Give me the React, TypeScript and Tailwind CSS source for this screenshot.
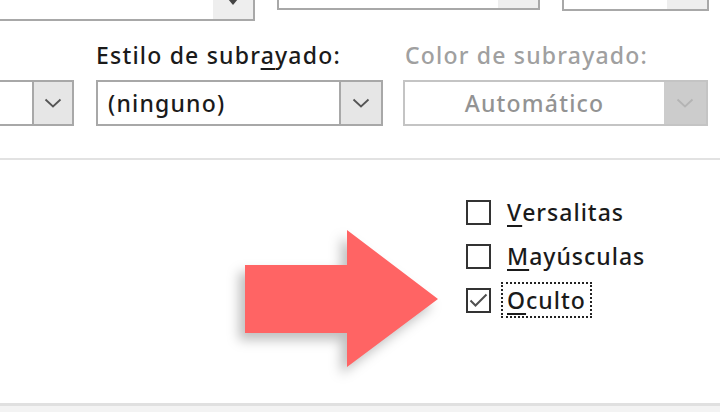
import React from "react";

const font = { fontFamily: '"Noto Sans", "Open Sans", sans-serif' };

function Chevron({ disabled }: { disabled?: boolean }) {
  return (
    <svg width="18" height="10" viewBox="0 0 18 10" fill="none">
      <path
        d="M1.5 1.5 L9 8.5 L16.5 1.5"
        stroke={disabled ? "#b4b4b4" : "#555555"}
        strokeWidth="1.8"
      />
    </svg>
  );
}

function Check({ checked, label, u, focus }: { checked?: boolean; label: string; u: number; focus?: boolean }) {
  return (
    <div className="flex items-center h-[44px]">
      <div className="w-[25px] h-[25px] border-2 border-[#333333] bg-white flex items-center justify-center">
        {checked && (
          <svg width="19" height="15" viewBox="0 0 19 15" fill="none">
            <path d="M1.5 7.5 L6.5 12.5 L17.5 1.5" stroke="#505050" strokeWidth="2" />
          </svg>
        )}
      </div>
      <div
        className={`ml-[10px] px-[4px] h-[36px] flex items-center text-[23px] font-medium tracking-[1px] text-[#1a1a1a] ${
          focus ? "border-2 border-dotted border-[#222222]" : "border-2 border-transparent"
        }`}
      >
        <span className="underline decoration-[2px] underline-offset-[4px]">{label.slice(0, u)}</span>
        <span>{label.slice(u)}</span>
      </div>
    </div>
  );
}

export default function App() {
  return (
    <div className="relative w-[720px] h-[413px] bg-white overflow-hidden" style={font}>
      {/* top row, cut off by the picture edge */}
      <div className="flex items-start h-[22px]">
        <div className="ml-[-30px] mt-[-30px] w-[285px] h-[51px] border-2 border-[#a8a8a8] flex justify-end">
          <div className="w-[40px] bg-[#eeeeee] flex items-end justify-center pb-[13px]">
            <svg width="12" height="7" viewBox="0 0 12 7">
              <path d="M1 0 L11 0 L6 6 Z" fill="#444444" />
            </svg>
          </div>
        </div>
        <div className="ml-[22px] mt-[-30px] w-[263px] h-[40px] border-2 border-[#a8a8a8] flex justify-end">
          <div className="w-[40px] bg-[#eeeeee]" />
        </div>
        <div className="ml-[22px] mt-[-30px] w-[147px] h-[41px] border-2 border-[#a8a8a8] flex justify-between">
          <div className="pl-[12px] text-[23px] font-medium leading-[22px] mt-[-1px] text-[#1a1a1a]">12</div>
          <div className="w-[40px] bg-[#eeeeee]" />
        </div>
      </div>

      {/* underline row */}
      <div className="flex items-end pt-[18px]">
        <div className="ml-[-30px] w-[104px] h-[46px] border-2 border-[#a8a8a8] flex justify-end">
          <div className="w-[40px] bg-[#e6e6e6] border-l-2 border-[#a8a8a8] flex items-center justify-center">
            <Chevron />
          </div>
        </div>
        <div className="ml-[22px] flex flex-col">
          <div className="text-[23px] font-medium tracking-[1.2px] leading-[30px] mb-[10px] text-[#1a1a1a]">
            Estilo de subr<span className="underline decoration-[2px] underline-offset-[4px]">a</span>yado:
          </div>
          <div className="w-[287px] h-[46px] border-2 border-[#a8a8a8] flex justify-between">
            <div className="pl-[10px] flex items-center text-[23px] font-medium tracking-[1.2px] text-[#1a1a1a]">
              (ninguno)
            </div>
            <div className="w-[42px] bg-[#e6e6e6] border-l-2 border-[#a8a8a8] flex items-center justify-center">
              <Chevron />
            </div>
          </div>
        </div>
        <div className="ml-[20px] flex flex-col">
          <div className="pl-[2px] text-[23px] font-medium tracking-[1.2px] leading-[30px] mb-[10px] text-[#a0a0a0]">
            Color de subrayado:
          </div>
          <div className="w-[305px] h-[46px] border-2 border-[#c4c4c4] flex">
            <div className="flex-1 flex items-center justify-center text-[23px] font-medium tracking-[1.2px] text-[#939393]">
              Automático
            </div>
            <div className="w-[42px] bg-[#cccccc] flex items-center justify-center">
              <Chevron disabled />
            </div>
          </div>
        </div>
      </div>

      <div className="mt-[32px] h-[2px] bg-[#e2e2e2]" />

      {/* effects */}
      <div className="h-[243px] pt-[30px] pl-[466px] flex flex-col">
        <Check label="Versalitas" u={1} />
        <Check label="Mayúsculas" u={1} />
        <Check label="Oculto" u={1} checked focus />
      </div>

      <div className="h-[3px] bg-[#e0e0e0]" />
      <div className="h-[6px] bg-[#f3f3f3]" />

      {/* red arrow */}
      <svg
        className="absolute left-0 top-0 pointer-events-none"
        width="720"
        height="413"
        viewBox="0 0 720 413"
        style={{ filter: "drop-shadow(-6px 7px 6px rgba(0,0,0,0.25))" }}
      >
        <polygon points="245,265 347,265 347,230 438,299 347,367 347,333 245,333" fill="#ff6464" />
      </svg>
    </div>
  );
}
